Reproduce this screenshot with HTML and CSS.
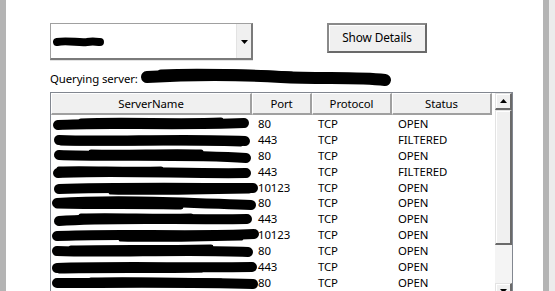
FILE: index.html
```html
<!DOCTYPE html>
<html>
<head>
<meta charset="utf-8">
<link rel="stylesheet" href="styles.css">
</head>
<body>
<div class="window">
  <div class="edge-left"></div>
  <div class="content">
    <div class="top">
      <div class="combo">
        <div class="combo-value">
          <svg class="redact-combo" width="52" height="12" viewBox="0 0 52 12"><path d="M4 6 C 14 4, 26 7, 34 6 C 40 5, 46 6, 47 6" /></svg>
        </div>
        <div class="combo-btn"><svg width="7" height="4" viewBox="0 0 7 4"><path d="M0 0 H7 L3.5 4 Z"/></svg></div>
      </div>
      <button class="btn">Show Details</button>
    </div>
    <div class="label"><span>Querying server:</span><svg class="redact-label" width="252" height="18" viewBox="0 0 252 18"><path d="M6 8 C 40 6, 90 5, 140 8 C 180 10, 215 8, 244 11"/><path class="thin" d="M20 4 C 60 2, 110 4, 150 6"/></svg></div>
    <div class="list">
      <div class="table">
        <div class="head">
          <div class="hcell c1">ServerName</div>
          <div class="hcell c2">Port</div>
          <div class="hcell c3">Protocol</div>
          <div class="hcell c4">Status</div>
        </div>
        <div class="row"><div class="cell c1"><svg class="scrib" viewBox="0 0 201 16"><path d="M7 9 C 50 6, 120 10, 193 7"/><path class="thin" d="M30 5 C 70 3, 130 6, 170 4"/></svg></div><div class="cell c2">80</div><div class="cell c3">TCP</div><div class="cell c4">OPEN</div></div>
        <div class="row"><div class="cell c1"><svg class="scrib" viewBox="0 0 201 16"><path d="M8 8 C 60 10, 130 6, 194 9"/><path class="thin" d="M10 11 C 70 12, 120 10, 190 12"/></svg></div><div class="cell c2">443</div><div class="cell c3">TCP</div><div class="cell c4">FILTERED</div></div>
        <div class="row"><div class="cell c1"><svg class="scrib" viewBox="0 0 201 16"><path d="M8 7 C 50 9, 140 6, 195 10"/><path class="thin" d="M40 4 C 80 5, 110 3, 150 4"/></svg></div><div class="cell c2">80</div><div class="cell c3">TCP</div><div class="cell c4">OPEN</div></div>
        <div class="row"><div class="cell c1"><svg class="scrib" viewBox="0 0 201 16"><path d="M7 9 C 60 6, 140 10, 195 9"/><path class="thin" d="M8 5 C 40 4, 70 6, 110 5"/></svg></div><div class="cell c2">443</div><div class="cell c3">TCP</div><div class="cell c4">FILTERED</div></div>
        <div class="row"><div class="cell c1"><svg class="scrib" viewBox="0 0 201 16"><path d="M8 9 C 60 7, 140 8, 202 8"/><path class="thin" d="M60 12 C 100 13, 150 12, 198 11"/></svg></div><div class="cell c2">10123</div><div class="cell c3">TCP</div><div class="cell c4">OPEN</div></div>
        <div class="row"><div class="cell c1"><svg class="scrib" viewBox="0 0 201 16"><path d="M6 8 C 70 4, 140 8, 200 10"/><path class="thin" d="M6 11 C 50 12, 90 11, 130 12"/></svg></div><div class="cell c2">80</div><div class="cell c3">TCP</div><div class="cell c4">OPEN</div></div>
        <div class="row"><div class="cell c1"><svg class="scrib" viewBox="0 0 201 16"><path d="M8 10 C 60 6, 130 9, 196 8"/><path class="thin" d="M30 5 C 70 4, 100 6, 140 5"/></svg></div><div class="cell c2">443</div><div class="cell c3">TCP</div><div class="cell c4">OPEN</div></div>
        <div class="row"><div class="cell c1"><svg class="scrib" viewBox="0 0 201 16"><path d="M6 9 C 60 6, 140 10, 203 7"/><path class="thin" d="M70 12 C 110 13, 150 12, 190 11"/></svg></div><div class="cell c2">10123</div><div class="cell c3">TCP</div><div class="cell c4">OPEN</div></div>
        <div class="row"><div class="cell c1"><svg class="scrib" viewBox="0 0 201 16"><path d="M6 8 C 60 10, 140 6, 197 9"/><path class="thin" d="M20 5 C 60 4, 100 5, 160 4"/></svg></div><div class="cell c2">80</div><div class="cell c3">TCP</div><div class="cell c4">OPEN</div></div>
        <div class="row"><div class="cell c1"><svg class="scrib" viewBox="0 0 201 16"><path d="M6 9 C 60 7, 140 9, 201 8"/><path class="thin" d="M8 12 C 50 11, 110 12, 150 11"/></svg></div><div class="cell c2">443</div><div class="cell c3">TCP</div><div class="cell c4">OPEN</div></div>
        <div class="row"><div class="cell c1"><svg class="scrib" viewBox="0 0 201 16"><path d="M6 8 C 60 8, 140 7, 202 9"/><path class="thin" d="M40 5 C 80 4, 120 5, 170 6"/></svg></div><div class="cell c2">80</div><div class="cell c3">TCP</div><div class="cell c4">OPEN</div></div>
      </div>
      <div class="scroll">
        <div class="sbtn up"><svg width="7" height="4" viewBox="0 0 7 4"><path d="M0 4 H7 L3.5 0 Z"/></svg></div>
        <div class="thumb"></div>
        <div class="track"></div>
        <div class="sbtn down"><svg width="7" height="4" viewBox="0 0 7 4"><path d="M0 0 H7 L3.5 4 Z"/></svg></div>
      </div>
    </div>
  </div>
  <div class="edge-right"></div>
</div>
</body>
</html>
```

FILE: styles.css
```css
* { box-sizing: border-box; }
html, body {
  margin: 0;
  padding: 0;
  background: #ffffff;
}
body {
  width: 555px;
  height: 291px;
  overflow: hidden;
  font-family: "Noto Sans", "Open Sans", sans-serif;
  font-size: 11.4px;
  letter-spacing: -0.1px;
  color: #000;
}
.window {
  display: flex;
  height: 291px;
}
.edge-left {
  width: 6px;
  background: #b4b4b4;
}
.edge-right {
  width: 12px;
  border-left: 6px solid #b4b4b4;
  background: #ececec;
}
.content {
  flex: 1;
  padding: 23px 0 0 44px;
  overflow: hidden;
}
.top {
  display: flex;
  align-items: flex-start;
}
.combo {
  width: 203px;
  height: 37px;
  display: flex;
  border-top: 1px solid #a0a0a0;
  border-left: 1px solid #a0a0a0;
  border-right: 2px solid #7a7a7a;
  border-bottom: 2px solid #7a7a7a;
  box-shadow: 0 1px 0 #e3e3e3;
  background: #fff;
}
.combo-value {
  flex: 1;
  display: flex;
  align-items: center;
  padding-left: 2px;
  padding-top: 1px;
}
.redact-combo path, .redact-label path, .scrib path {
  fill: none;
  stroke: #000;
  stroke-linecap: round;
}
.redact-combo path { stroke-width: 8; }
.combo-btn {
  width: 15px;
  background: #f0f0f0;
  border-left: 1px solid #e3e3e3;
  display: flex;
  align-items: center;
  justify-content: center;
  padding-top: 2px;
}
.combo-btn svg, .sbtn svg { fill: #000; }
.btn {
  margin-left: 74px;
  width: 100px;
  height: 30px;
  padding: 0 0 2px 0;
  font-family: inherit;
  font-size: 11.8px;
  letter-spacing: -0.1px;
  color: #000;
  background: #f0f0f0;
  border-top: 2px solid #8a8a8a;
  border-left: 2px solid #8a8a8a;
  border-right: 2px solid #6a6a6a;
  border-bottom: 2px solid #6a6a6a;
  box-shadow: inset 1px 1px 0 #fff;
}
.label {
  margin-top: 11px;
  height: 16px;
  line-height: 16px;
  display: flex;
  align-items: center;
  white-space: nowrap;
}
.redact-label {
  margin-left: 3px;
  margin-top: -2px;
  overflow: visible;
}
.redact-label path { stroke-width: 12; }
.redact-label path.thin { stroke-width: 7; }
.list {
  margin-top: 5px;
  width: 463px;
  height: 215px;
  display: flex;
  border: 1px solid #828790;
  border-bottom: none;
  overflow: hidden;
}
.table {
  flex: 1;
}
.head {
  display: flex;
  height: 22px;
}
.hcell {
  height: 22px;
  line-height: 19px;
  text-align: center;
  background: #f0f0f0;
  border-top: 1px solid #fff;
  border-left: 1px solid #fff;
  border-right: 2px solid #a0a0a0;
  border-bottom: 2px solid #a0a0a0;
}
.c1 { width: 201px; }
.c2 { width: 60px; }
.c3 { width: 80px; }
.c4 { width: 100px; }
.head + .row { margin-top: 1px; }
.row {
  display: flex;
  height: 15.9px;
  line-height: 16px;
  white-space: nowrap;
}
.cell {
  padding-left: 6px;
}
.cell.c1 { padding-left: 0; }
.scrib {
  width: 201px;
  height: 16px;
  display: block;
  overflow: visible;
}
.scrib path { stroke-width: 10; }
.scrib path.thin { stroke-width: 5; }
.scroll {
  width: 17px;
  display: flex;
  flex-direction: column;
  background: #f4f4f4;
}
.sbtn {
  height: 17px;
  display: flex;
  align-items: center;
  justify-content: center;
  background: #f0f0f0;
  border-top: 1px solid #e3e3e3;
  border-left: 1px solid #e3e3e3;
  border-right: 2px solid #6a6a6a;
  border-bottom: 2px solid #6a6a6a;
  box-shadow: inset 1px 1px 0 #fff;
  flex: none;
}
.thumb {
  height: 135px;
  flex: none;
  background: #f0f0f0;
  border-top: 1px solid #e3e3e3;
  border-left: 1px solid #e3e3e3;
  border-right: 2px solid #6a6a6a;
  border-bottom: 2px solid #6a6a6a;
  box-shadow: inset 1px 1px 0 #fff;
}
.track {
  height: 38px;
  flex: none;
}
```
